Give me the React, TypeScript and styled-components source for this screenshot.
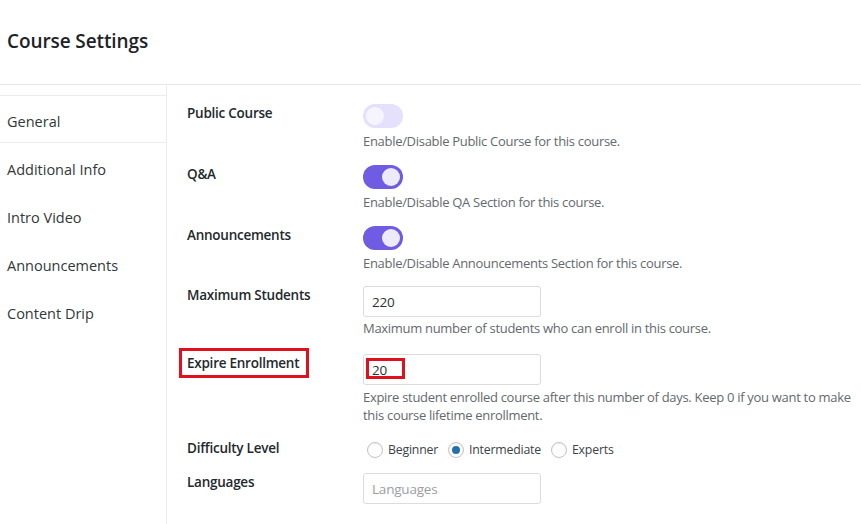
import React from 'react'
import styled, {createGlobalStyle} from 'styled-components'

const GlobalStyle = createGlobalStyle`
  html, body {
    margin: 0;
    padding: 0;
    background: #fff;
  }
  body {
    font-family: 'Open Sans', 'Noto Sans', sans-serif;
    color: #1d2327;
  }
  * {
    box-sizing: border-box;
  }
`

const Page = styled.div`
  width: 861px;
  height: 524px;
  overflow: hidden;
  background: #fff;
`

const Header = styled.div`
  height: 85px;
  display: flex;
  align-items: center;
  padding: 0 7px 2px;
  border-bottom: 1px solid #e8e8e8;
`

const Title = styled.h1`
  margin: 0;
  font-size: 19px;
  font-weight: 600;
  letter-spacing: -0.1px;
  color: #1d2327;
`

const Body = styled.div`
  display: flex;
  align-items: stretch;
  min-height: 439px;
`

const Sidebar = styled.ul`
  width: 167px;
  flex: none;
  margin: 0;
  padding: 10px 0 0;
  list-style: none;
  border-right: 1px solid #ececec;
`

const NavItem = styled.li<{$active?: boolean}>`
  height: 48px;
  display: flex;
  align-items: center;
  padding: 4px 7px 0;
  font-size: 14.5px;
  color: #32373c;
  border-top: ${({$active}) => ($active ? '1px solid #ececec' : '0')};
  border-bottom: ${({$active}) => ($active ? '1px solid #ececec' : '0')};
`

const Content = styled.div`
  flex: 1;
  padding: 19px 0 0 20px;
`

const Row = styled.div<{$gap?: number}>`
  display: grid;
  grid-template-columns: 176px 1fr;
  margin-bottom: ${({$gap}) => $gap ?? 15}px;
`

const Label = styled.div`
  line-height: 18px;
  font-size: 13.5px;
  font-weight: 600;
  letter-spacing: -0.25px;
  color: #23282d;
`

const Marked = styled.span`
  position: relative;
  &::after {
    content: '';
    position: absolute;
    left: -8px;
    right: -10px;
    top: -6px;
    bottom: -6px;
    border: 3px solid #e0101c;
  }
`

const Field = styled.div`
  display: flex;
  flex-direction: column;
  align-items: flex-start;
`

const Desc = styled.p<{$top?: number}>`
  margin: ${({$top}) => $top ?? 4}px 0 0;
  font-size: 13px;
  line-height: 18px;
  letter-spacing: -0.3px;
  color: #646970;
  max-width: 492px;
`

const Toggle = styled.span<{$on?: boolean}>`
  position: relative;
  width: 40px;
  height: 24px;
  border-radius: 12px;
  background: ${({$on}) => ($on ? '#6f5ce3' : '#e5e0fb')};

  &::after {
    content: '';
    position: absolute;
    top: 3px;
    left: ${({$on}) => ($on ? '19px' : '3px')};
    width: 18px;
    height: 18px;
    border-radius: 50%;
    background: ${({$on}) => ($on ? '#edebfa' : '#f6f5fd')};
  }
`

const InputWrap = styled.div`
  position: relative;
`

const TextInput = styled.input`
  display: block;
  width: 178px;
  height: 31px;
  margin: 0;
  padding: 0 8px;
  border: 1px solid #dcdcde;
  border-radius: 3px;
  background: #fff;
  font-family: 'Open Sans', 'Noto Sans', sans-serif;
  font-size: 13.5px;
  letter-spacing: -0.2px;
  color: #2c3338;
  outline: none;

  &::placeholder {
    color: #9a9ea3;
  }
`

const ValueMark = styled.span`
  position: absolute;
  left: 3px;
  top: 4px;
  width: 39px;
  height: 21px;
  border: 3px solid #e0101c;
`

const Radios = styled.div`
  display: flex;
  align-items: center;
  gap: 10px;
  padding: 2px 0 0 4px;
`

const RadioOption = styled.label`
  display: flex;
  align-items: center;
  gap: 5px;
  font-size: 12.3px;
  letter-spacing: -0.2px;
  color: #3c434a;
`

const RadioDot = styled.span<{$checked?: boolean}>`
  position: relative;
  width: 16px;
  height: 16px;
  border-radius: 50%;
  border: 1px solid #c3c4c7;
  background: #fff;
  box-shadow: inset 0 1px 2px rgba(0, 0, 0, 0.08);

  &::after {
    content: '';
    display: ${({$checked}) => ($checked ? 'block' : 'none')};
    position: absolute;
    left: 3px;
    top: 3px;
    width: 8px;
    height: 8px;
    border-radius: 50%;
    background: #2271b1;
  }
`

const nav = ['General', 'Additional Info', 'Intro Video', 'Announcements', 'Content Drip']

const toggles = [
  {label: 'Public Course', on: false, desc: 'Enable/Disable Public Course for this course.'},
  {label: 'Q&A', on: true, desc: 'Enable/Disable QA Section for this course.'},
  {label: 'Announcements', on: true, desc: 'Enable/Disable Announcements Section for this course.'},
]

const levels = [
  {name: 'Beginner', checked: false},
  {name: 'Intermediate', checked: true},
  {name: 'Experts', checked: false},
]

export default function App() {
  return (
    <Page>
      <GlobalStyle />
      <Header>
        <Title>Course Settings</Title>
      </Header>
      <Body>
        <Sidebar>
          {nav.map((item, i) => (
            <NavItem key={item} $active={i === 0}>
              {item}
            </NavItem>
          ))}
        </Sidebar>
        <Content>
          {toggles.map((t, i) => (
            <Row key={t.label} $gap={i === 2 ? 14 : 15}>
              <Label>{t.label}</Label>
              <Field>
                <Toggle $on={t.on} />
                <Desc>{t.desc}</Desc>
              </Field>
            </Row>
          ))}

          <Row $gap={17}>
            <Label>Maximum Students</Label>
            <Field>
              <TextInput readOnly value='220' />
              <Desc $top={2}>Maximum number of students who can enroll in this course.</Desc>
            </Field>
          </Row>

          <Row $gap={15}>
            <Label>
              <Marked>Expire Enrollment</Marked>
            </Label>
            <Field>
              <InputWrap>
                <TextInput readOnly value='20' />
                <ValueMark />
              </InputWrap>
              <Desc $top={3}>
                Expire student enrolled course after this number of days. Keep 0 if you want to make
                this course lifetime enrollment.
              </Desc>
            </Field>
          </Row>

          <Row $gap={15}>
            <Label>Difficulty Level</Label>
            <Radios>
              {levels.map((l) => (
                <RadioOption key={l.name}>
                  <RadioDot $checked={l.checked} />
                  {l.name}
                </RadioOption>
              ))}
            </Radios>
          </Row>

          <Row>
            <Label>Languages</Label>
            <Field>
              <TextInput readOnly placeholder='Languages' />
            </Field>
          </Row>
        </Content>
      </Body>
    </Page>
  )
}
